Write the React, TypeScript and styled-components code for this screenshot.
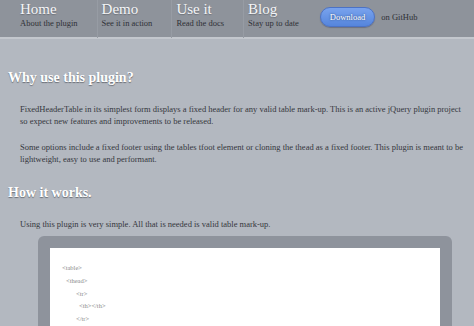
import styled, { createGlobalStyle } from 'styled-components'

const GlobalStyle = createGlobalStyle`
  html, body {
    margin: 0;
    padding: 0;
    background: #b3b8c0;
  }
  body {
    font-family: 'Liberation Serif', 'Times New Roman', serif;
    overflow: hidden;
  }
`

const navItems = [
  { title: 'Home', sub: 'About the plugin' },
  { title: 'Demo', sub: 'See it in action' },
  { title: 'Use it', sub: 'Read the docs' },
  { title: 'Blog', sub: 'Stay up to date' },
]

const codeLines = [
  { indent: 0, text: '<table>' },
  { indent: 4, text: '<thead>' },
  { indent: 14, text: '<tr>' },
  { indent: 17, text: '<th></th>' },
  { indent: 14, text: '</tr>' },
]

const App = () => (
  <Page>
    <GlobalStyle />
    <Header>
      <Nav>
        {navItems.map((item) => (
          <NavItem key={item.title}>
            <NavTitle>{item.title}</NavTitle>
            <NavSub>{item.sub}</NavSub>
          </NavItem>
        ))}
        <DownloadButton>{'Download'}</DownloadButton>
        <GitHubLink>{'on GitHub'}</GitHubLink>
      </Nav>
    </Header>
    <Content>
      <Heading>{'Why use this plugin?'}</Heading>
      <Paragraph>
        {'FixedHeaderTable in its simplest form displays a fixed header for any valid table mark-up. This is an active jQuery plugin project so expect new features and improvements to be released.'}
      </Paragraph>
      <Paragraph>
        {'Some options include a fixed footer using the tables tfoot element or cloning the thead as a fixed footer. This plugin is meant to be lightweight, easy to use and performant.'}
      </Paragraph>
      <Heading $gapAbove={20}>{'How it works.'}</Heading>
      <Paragraph>
        {'Using this plugin is very simple. All that is needed is valid table mark-up.'}
      </Paragraph>
      <CodeFrame>
        <CodeSheet>
          {codeLines.map((line, i) => (
            <CodeLine key={i} $indent={line.indent}>
              {line.text}
            </CodeLine>
          ))}
        </CodeSheet>
      </CodeFrame>
    </Content>
  </Page>
)

export default App

const Page = styled.div`
  width: 474px;
  height: 326px;
  overflow: hidden;
  background: #b3b8c0;
`

const Header = styled.header`
  height: 37px;
  background: #8e939b;
  border-bottom: 2px solid #c3c7cd;
`

const Nav = styled.nav`
  display: flex;
  align-items: flex-start;
  height: 100%;
  padding-left: 15px;
`

const NavItem = styled.div`
  display: flex;
  flex-direction: column;
  height: 100%;
  padding: 1px 19px 0 4px;
  border-left: 1px solid #979ca4;
  &:first-child {
    border-left-color: transparent;
  }
`

const NavTitle = styled.span`
  font-size: 15px;
  line-height: 17px;
  color: #f4f5f7;
  text-shadow: 0 1px 1px #6d7179;
`

const NavSub = styled.span`
  font-size: 8.5px;
  line-height: 11px;
  color: #2e3036;
  white-space: nowrap;
`

const DownloadButton = styled.button`
  margin: 7px 0 0 2px;
  height: 20px;
  padding: 0 9px;
  border-radius: 10px;
  border: 1px solid #4c72c4;
  background: linear-gradient(#79a3ee, #5585dc);
  color: #ffffff;
  font-family: 'Liberation Serif', 'Times New Roman', serif;
  font-size: 8.5px;
  text-shadow: 0 0 2px #24406e;
  box-shadow: 0 1px 1px #6b7282;
`

const GitHubLink = styled.span`
  margin: 12px 0 0 6px;
  font-size: 8.5px;
  color: #2e3036;
`

const Content = styled.main`
  padding: 31px 10px 0 8px;
`

const Heading = styled.h2<{ $gapAbove?: number }>`
  margin: ${(p) => p.$gapAbove ?? 0}px 0 17px;
  font-size: 14px;
  line-height: 16px;
  font-weight: bold;
  color: #ffffff;
  text-shadow: 0 1px 1px #6a6e76;
`

const Paragraph = styled.p`
  margin: 0 0 14px 12px;
  font-size: 8.5px;
  line-height: 12px;
  color: #35373d;
`

const CodeFrame = styled.div`
  margin: -8px 12px 0 30px;
  padding: 12px 12px 0 12px;
  background: #8e939c;
  border-radius: 6px;
  height: 100px;
`

const CodeSheet = styled.div`
  background: #ffffff;
  height: 100%;
  padding: 14px 12px 0 12px;
`

const CodeLine = styled.div<{ $indent: number }>`
  padding-left: ${(p) => p.$indent}px;
  font-size: 6.5px;
  line-height: 12.8px;
  color: #8a8a8a;
`
